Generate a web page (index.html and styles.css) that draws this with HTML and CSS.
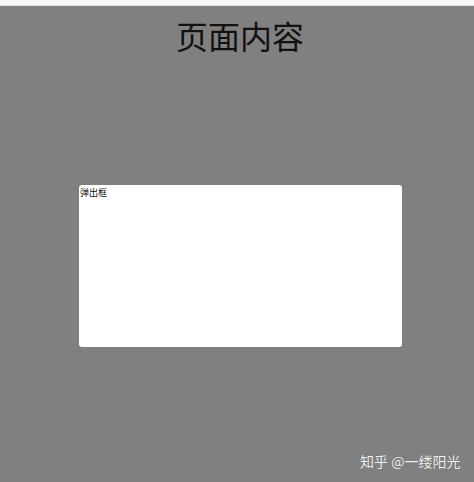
FILE: index.html
```html
<!DOCTYPE html>
<html lang="zh">
<head>
<meta charset="utf-8">
<title>页面内容</title>
<link rel="stylesheet" href="styles.css">
</head>
<body>
<div class="topbar"></div>
<main class="page">
  <h1 class="title">页面内容</h1>
</main>
<div class="modal">弹出框</div>
<div class="watermark">知乎 @一缕阳光</div>
</body>
</html>
```
FILE: styles.css
```css
html, body {
  margin: 0;
  padding: 0;
  height: 100%;
}
body {
  background: #808080;
  font-family: "Noto Sans CJK SC", "Noto Sans", sans-serif;
  position: relative;
  overflow: hidden;
}
.topbar {
  height: 5px;
  background: #f7f7f7;
  border-bottom: 1px solid #e2e2e2;
}
.page {
  display: flex;
  justify-content: center;
}
.title {
  margin: 8px 0 0 6px;
  font-size: 32px;
  font-weight: 400;
  line-height: 42px;
  color: #111;
}
.modal {
  position: absolute;
  left: 79px;
  top: 185px;
  width: 323px;
  height: 162px;
  background: #fff;
  border-radius: 3px;
  font-size: 9px;
  line-height: 12px;
  padding: 2px 1px;
  box-sizing: border-box;
  color: #111;
}
.watermark {
  position: absolute;
  left: 360px;
  top: 450px;
  font-size: 14px;
  line-height: 22px;
  color: #f2f2f2;
  text-shadow: 0 0 1px rgba(0,0,0,0.3);
}
```
